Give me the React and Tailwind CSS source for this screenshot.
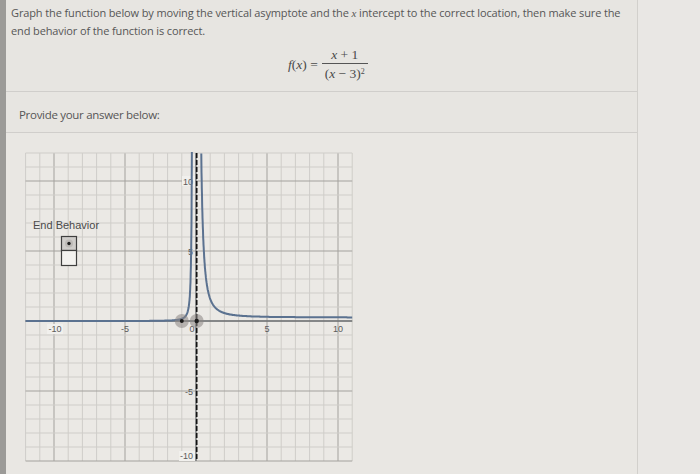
const OX = 171;
const OY = 169;
const SX = 14.2;
const SY = 14;
const XMIN = -12;
const XMAX = 11;
const YMIN = -10;
const YMAX = 12;

const px = (u) => OX + u * SX;
const py = (v) => OY - v * SY;

function branch(f, from, to, step) {
  const pts = [];
  for (let u = from; u <= to + 1e-9; u += step) {
    const v = f(u);
    if (v > YMAX + 0.5) continue;
    pts.push(`${px(u).toFixed(1)},${py(v).toFixed(1)}`);
  }
  return 'M' + pts.join(' L');
}

function Graph() {
  const xs = [];
  for (let u = XMIN; u <= XMAX; u++) xs.push(u);
  const ys = [];
  for (let v = YMIN; v <= YMAX; v++) ys.push(v);

  const left = branch((u) => 0.1 / ((u + 0.2) * (u + 0.2)), XMIN, -0.28, 0.01);
  const right = branch((u) => 0.25 + 1.2 / ((u - 0.05) * (u - 0.05)), 0.36, XMAX, 0.01);

  return (
    <svg width="330" height="312" viewBox="0 0 330 312" className="block">
      <rect x={px(XMIN)} y={py(YMAX)} width={(XMAX - XMIN) * SX} height={(YMAX - YMIN) * SY} fill="#ebe9e5" />
      {xs.map((u) => (
        <line
          key={'x' + u}
          x1={px(u)}
          x2={px(u)}
          y1={py(YMAX)}
          y2={py(YMIN)}
          stroke={u % 5 === 0 ? '#a3a19d' : '#cfcdc9'}
          strokeWidth="1"
        />
      ))}
      {ys.map((v) => (
        <line
          key={'y' + v}
          x1={px(XMIN)}
          x2={px(XMAX)}
          y1={py(v)}
          y2={py(v)}
          stroke={v % 5 === 0 ? '#a3a19d' : '#cfcdc9'}
          strokeWidth="1"
        />
      ))}
      <line x1={px(XMIN)} x2={px(XMAX)} y1={py(0)} y2={py(0)} stroke="#6f7275" strokeWidth="1.6" />
      <line x1={px(0)} x2={px(0)} y1={py(YMAX)} y2={py(YMIN)} stroke="#6f7275" strokeWidth="1.2" />

      <g fontFamily="'Liberation Sans', Arial, sans-serif" fontSize="9" fill="#5b5b5b">
        <rect x={px(-10) - 7} y={py(0) + 3} width="16" height="10" fill="#f1f0ed" />
        <text x={px(-10) + 1} y={py(0) + 11} textAnchor="middle">-10</text>
        <text x={px(-5)} y={py(0) + 11} textAnchor="middle">-5</text>
        <text x={px(0) - 4} y={py(0) + 11} textAnchor="middle">0</text>
        <text x={px(5)} y={py(0) + 11} textAnchor="middle">5</text>
        <text x={px(10)} y={py(0) + 11} textAnchor="middle">10</text>
        <rect x={px(0) - 14} y={py(10) - 5} width="13" height="10" fill="#f1f0ed" />
        <text x={px(0) - 3} y={py(10) + 4} textAnchor="end">10</text>
        <text x={px(0) - 3} y={py(5) + 4} textAnchor="end">5</text>
        <text x={px(0) - 3} y={py(-5) + 4} textAnchor="end">-5</text>
        <rect x={px(0) - 17} y={py(-10) - 10} width="16" height="10" fill="#f1f0ed" />
        <text x={px(0) - 3} y={py(-10) - 2} textAnchor="end">-10</text>
      </g>

      <path d={left} fill="none" stroke="#5b7290" strokeWidth="2" />
      <path d={right} fill="none" stroke="#5b7290" strokeWidth="2" />

      <line
        x1={px(0.05)}
        x2={px(0.05)}
        y1={py(YMAX)}
        y2={py(YMIN)}
        stroke="#111111"
        strokeWidth="1.6"
        strokeDasharray="5 2"
      />

      <circle cx={px(-1)} cy={py(0)} r="7" fill="#8a8584" fillOpacity="0.55" />
      <circle cx={px(-1)} cy={py(0)} r="2" fill="#1a1a1a" />
      <circle cx={px(0.05)} cy={py(0)} r="7" fill="#8a8584" fillOpacity="0.55" />
      <circle cx={px(0.05)} cy={py(0)} r="2.2" fill="#1a1a1a" />

      <text x="8" y="77" fontFamily="'Liberation Sans', Arial, sans-serif" fontSize="11" fill="#4a4a4a">
        End Behavior
      </text>
      <rect x="36.5" y="84.5" width="15" height="14" fill="#cfcdca" stroke="#3f3f3f" strokeWidth="1.2" />
      <circle cx="44" cy="91.5" r="4" fill="#bdbab7" />
      <circle cx="44" cy="91.5" r="1.7" fill="#1f1f1f" />
      <rect x="36.5" y="98.5" width="15" height="15" fill="#f3f2ef" stroke="#3f3f3f" strokeWidth="1.2" />
    </svg>
  );
}

const sans = { fontFamily: "'Open Sans', 'Noto Sans', sans-serif" };
const serif = { fontFamily: "'Liberation Serif', 'Times New Roman', serif" };

export default function App() {
  return (
    <div className="flex w-[700px] h-[474px] overflow-hidden bg-[#e8e6e2]">
      <div className="w-[6px] shrink-0 bg-[#9c9b98]" />
      <div className="w-[632px] shrink-0 flex flex-col border-r border-[#d2d0cc] bg-[#e7e5e1]">
        <div className="h-[92px] shrink-0 border-b border-[#d0cecb] px-[5px] pt-[4px]">
          <p className="text-[11px] leading-[17px] tracking-[-0.12px] text-[#565656] whitespace-nowrap" style={sans}>
            Graph the function below by moving the vertical asymptote and the{' '}
            <i style={serif}>x</i> intercept to the correct location, then make sure the
            <br />
            end behavior of the function is correct.
          </p>
          <div className="flex items-center ml-[277px] mt-[8px] text-[13.5px] text-[#4a4a4a]" style={serif}>
            <span>
              <i>f</i>(<i>x</i>) =
            </span>
            <span className="flex flex-col items-center ml-[4px]">
              <span className="px-[6px] leading-[16px]">
                <i>x</i> + 1
              </span>
              <span className="w-[46px] h-px bg-[#555]" />
              <span className="leading-[20px]">
                (<i>x</i> − 3)<sup className="text-[8px]">2</sup>
              </span>
            </span>
          </div>
        </div>
        <div className="h-[41px] shrink-0 border-b border-[#d0cecb] pl-[13px] pt-[15px]">
          <span className="block text-[11.5px] leading-[16px] tracking-[-0.3px] text-[#565656]" style={sans}>
            Provide your answer below:
          </span>
        </div>
        <div className="flex-1 pl-[19px] pt-[19px] bg-[#e9e7e3]">
          <Graph />
        </div>
      </div>
      <div className="flex-1 bg-[#e9e7e4]" />
    </div>
  );
}
